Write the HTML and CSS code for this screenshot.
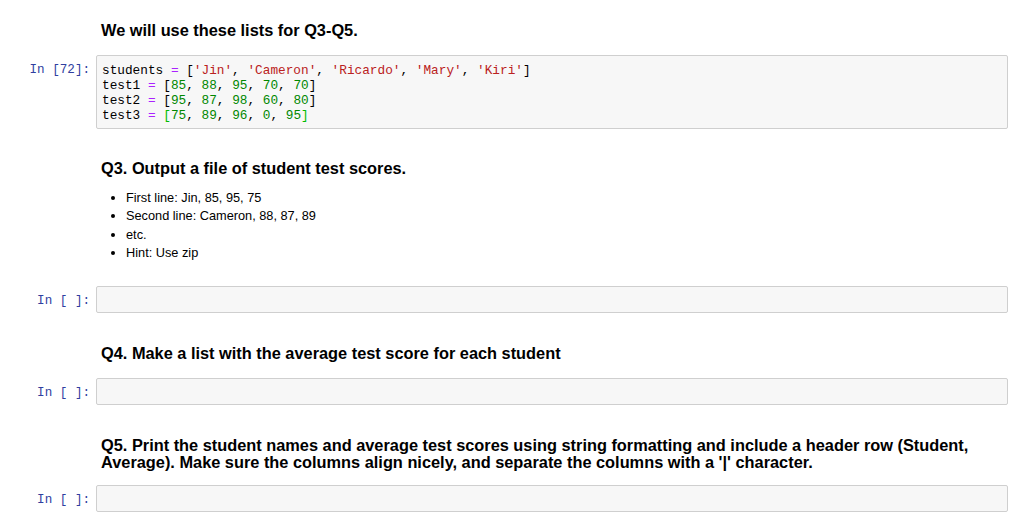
FILE: index.html
```html
<!DOCTYPE html>
<html>
<head>
<meta charset="utf-8">
<link rel="stylesheet" href="styles.css">
</head>
<body>
<div class="notebook">
  <div class="cell text-cell h1-cell">
    <div class="prompt"></div>
    <div class="content"><h4 class="heading">We will use these lists for Q3-Q5.</h4></div>
  </div>

  <div class="cell code-cell cell-code1">
    <div class="prompt in">In&nbsp;[72]:</div>
    <div class="content"><pre class="code"><span>students</span> <span class="op">=</span> [<span class="s">'Jin'</span>, <span class="s">'Cameron'</span>, <span class="s">'Ricardo'</span>, <span class="s">'Mary'</span>, <span class="s">'Kiri'</span>]
test1 <span class="op">=</span> [<span class="n">85</span>, <span class="n">88</span>, <span class="n">95</span>, <span class="n">70</span>, <span class="n">70</span>]
test2 <span class="op">=</span> [<span class="n">95</span>, <span class="n">87</span>, <span class="n">98</span>, <span class="n">60</span>, <span class="n">80</span>]
test3 <span class="op">=</span> <span class="mb">[</span><span class="n">75</span>, <span class="n">89</span>, <span class="n">96</span>, <span class="n">0</span>, <span class="n">95</span><span class="mb">]</span></pre></div>
  </div>

  <div class="cell text-cell q3-cell">
    <div class="prompt"></div>
    <div class="content">
      <h4 class="heading">Q3. Output a file of student test scores.</h4>
      <ul class="list">
        <li>First line: Jin, 85, 95, 75</li>
        <li>Second line: Cameron, 88, 87, 89</li>
        <li>etc.</li>
        <li>Hint: Use zip</li>
      </ul>
    </div>
  </div>

  <div class="cell code-cell cell-empty2">
    <div class="prompt in">In&nbsp;[&nbsp;]:</div>
    <div class="content"><div class="code empty"></div></div>
  </div>

  <div class="cell text-cell q4-cell">
    <div class="prompt"></div>
    <div class="content"><h4 class="heading">Q4. Make a list with the average test score for each student</h4></div>
  </div>

  <div class="cell code-cell cell-empty3">
    <div class="prompt in">In&nbsp;[&nbsp;]:</div>
    <div class="content"><div class="code empty"></div></div>
  </div>

  <div class="cell text-cell q5-cell">
    <div class="prompt"></div>
    <div class="content"><h4 class="heading">Q5. Print the student names and average test scores using string formatting and include a header row (Student, Average). Make sure the columns align nicely, and separate the columns with a '|' character.</h4></div>
  </div>

  <div class="cell code-cell cell-empty4">
    <div class="prompt in">In&nbsp;[&nbsp;]:</div>
    <div class="content"><div class="code empty"></div></div>
  </div>
</div>
</body>
</html>
```

FILE: styles.css
```css
html, body {
  margin: 0;
  padding: 0;
  background: #ffffff;
}

body {
  font-family: "Liberation Sans", Arial, sans-serif;
  color: #000;
}

.notebook {
  width: 1024px;
  padding-top: 22px;
}

.cell {
  display: flex;
  align-items: flex-start;
  padding-right: 16px;
}

.prompt {
  width: 96px;
  flex: 0 0 96px;
  box-sizing: border-box;
  text-align: right;
  padding-right: 6px;
  font-family: "Liberation Mono", "DejaVu Sans Mono", monospace;
  font-size: 12.6px;
  line-height: 15.3px;
  color: #303F9F;
}

.code-cell .prompt {
  padding-top: 7.5px;
}

.content {
  flex: 1 1 auto;
  min-width: 0;
}

.text-cell .content {
  padding-left: 5px;
}

.heading {
  margin: 0;
  font-weight: bold;
  font-size: 16.35px;
  line-height: 17px;
}

.code {
  margin: 0;
  box-sizing: border-box;
  border: 1px solid #cfcfcf;
  border-radius: 2px;
  background: #f7f7f7;
  padding: 6.5px 5px 4.5px 5px;
  font-family: "Liberation Mono", "DejaVu Sans Mono", monospace;
  font-size: 12.75px;
  line-height: 15.3px;
  color: #000;
  white-space: pre;
}

.code .op { color: #aa22ff; }
.code .s { color: #ba2121; }
.code .n { color: #008800; }
.code .mb { color: #00bb00; }

.code.empty {
  height: 27px;
  padding: 0;
}

.cell-code1 { margin-top: 16px; }

.q3-cell { margin-top: 31px; }

.list {
  margin: 12px 0 0 0;
  padding-left: 25px;
  font-size: 12.75px;
  line-height: 18.3px;
}

.cell-empty2 { margin-top: 24px; }

.q4-cell { margin-top: 32px; }

.cell-empty3 { margin-top: 16px; }

.q5-cell { margin-top: 32px; }

.cell-empty4 { margin-top: 14px; }
```
